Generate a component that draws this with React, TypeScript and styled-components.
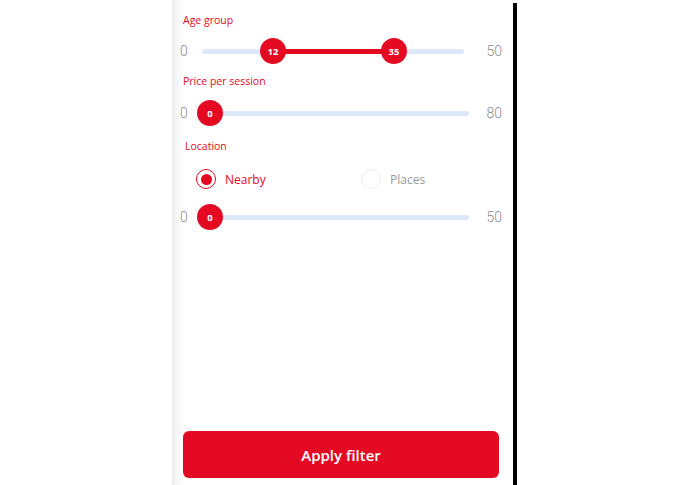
import React from "react";
import styled, { createGlobalStyle } from "styled-components";

const GlobalStyle = createGlobalStyle`
  html, body {
    margin: 0;
    padding: 0;
    background: #fff;
  }
  body {
    font-family: "Open Sans", "Liberation Sans", sans-serif;
  }
`;

const RED = "#e30a22";

type Thumb = { value: number; at: number };

type SliderData = {
  min: number;
  max: number;
  width: number;
  thumbs: Thumb[];
};

const age: SliderData = {
  min: 0,
  max: 50,
  width: 262,
  thumbs: [
    { value: 12, at: 71 },
    { value: 35, at: 192 },
  ],
};

const price: SliderData = { min: 0, max: 80, width: 267, thumbs: [{ value: 0, at: 8 }] };
const distance: SliderData = { min: 0, max: 50, width: 267, thumbs: [{ value: 0, at: 8 }] };

const Slider = ({ data, top }: { data: SliderData; top: number }) => {
  const first = data.thumbs[0].at;
  const last = data.thumbs[data.thumbs.length - 1].at;
  return (
    <SliderRow $top={top}>
      <MinValue>{data.min}</MinValue>
      <Track $width={data.width}>
        {data.thumbs.length > 1 && (
          <Range style={{ left: first, width: last - first }} />
        )}
        {data.thumbs.map((t) => (
          <Knob key={t.value} style={{ left: t.at }}>
            {t.value}
          </Knob>
        ))}
      </Track>
      <MaxValue>{data.max}</MaxValue>
    </SliderRow>
  );
};

export default function App() {
  return (
    <>
      <GlobalStyle />
      <Page>
        <Panel>
          <Label $top={13}>Age group</Label>
          <Slider data={age} top={11} />
          <Label $top={10}>Price per session</Label>
          <Slider data={price} top={12} />
          <Label $top={13} $indent={13}>
            Location
          </Label>
          <RadioGroup>
            <RadioItem $checked>
              <RadioCircle $checked />
              Nearby
            </RadioItem>
            <RadioItem>
              <RadioCircle />
              Places
            </RadioItem>
          </RadioGroup>
          <Slider data={distance} top={14} />
          <Spacer />
          <ApplyButton>Apply filter</ApplyButton>
        </Panel>
        <Rule />
      </Page>
    </>
  );
}

const Page = styled.div`
  display: flex;
  height: 485px;
  padding-left: 172px;
`;

const Panel = styled.div`
  width: 341px;
  height: 485px;
  display: flex;
  flex-direction: column;
  background: linear-gradient(to right, #ececec 0px, #f7f7f7 5px, #ffffff 12px);
`;

const Rule = styled.div`
  width: 4px;
  margin-top: 3px;
  background: #000;
`;

const Label = styled.div<{ $top: number; $indent?: number }>`
  margin: ${(p) => p.$top}px 0 0 ${(p) => p.$indent ?? 11}px;
  color: ${RED};
  font-size: 10.5px;
  font-weight: 500;
  line-height: 14px;
`;

const SliderRow = styled.div<{ $top: number }>`
  display: flex;
  align-items: center;
  height: 26px;
  margin-top: ${(p) => p.$top}px;
  padding: 0 11px 0 8px;
`;

const MinValue = styled.span`
  width: 22px;
  color: #8c8c8c;
  font-family: Roboto, "Liberation Sans", sans-serif;
  font-weight: 300;
  font-size: 14px;
`;

const MaxValue = styled.span`
  margin-left: auto;
  color: #8c8c8c;
  font-family: Roboto, "Liberation Sans", sans-serif;
  font-weight: 300;
  font-size: 14px;
`;

const Track = styled.div<{ $width: number }>`
  position: relative;
  width: ${(p) => p.$width}px;
  height: 5px;
  border-radius: 3px;
  background: #dde9f8;
`;

const Range = styled.div`
  position: absolute;
  top: 0;
  height: 5px;
  background: ${RED};
`;

const Knob = styled.div`
  position: absolute;
  top: 50%;
  width: 26px;
  height: 26px;
  margin: -13px 0 0 -13px;
  border-radius: 50%;
  background: ${RED};
  color: #fff;
  display: flex;
  align-items: center;
  justify-content: center;
  font-size: 9.5px;
  font-weight: 700;
`;

const RadioGroup = styled.div`
  display: grid;
  grid-template-columns: 165px 1fr;
  margin-top: 15px;
  padding-left: 24px;
`;

const RadioItem = styled.label<{ $checked?: boolean }>`
  display: flex;
  align-items: center;
  gap: 9px;
  height: 22px;
  color: ${(p) => (p.$checked ? RED : "#9a9a9a")};
  font-size: 12px;
  font-weight: 500;
`;

const RadioCircle = styled.span<{ $checked?: boolean }>`
  position: relative;
  width: 20px;
  height: 20px;
  box-sizing: border-box;
  border-radius: 50%;
  border: 1.5px solid ${(p) => (p.$checked ? RED : "#eeeeee")};

  &::after {
    content: "";
    display: ${(p) => (p.$checked ? "block" : "none")};
    position: absolute;
    top: 50%;
    left: 50%;
    width: 11px;
    height: 11px;
    margin: -5.5px 0 0 -5.5px;
    border-radius: 50%;
    background: ${RED};
  }
`;

const Spacer = styled.div`
  flex: 1;
`;

const ApplyButton = styled.button`
  margin: 0 14px 7px 11px;
  height: 47px;
  border: none;
  border-radius: 6px;
  background: #e50a23;
  color: #fff;
  font-family: "Open Sans", "Liberation Sans", sans-serif;
  font-size: 15px;
  font-weight: 600;
  cursor: pointer;
`;
